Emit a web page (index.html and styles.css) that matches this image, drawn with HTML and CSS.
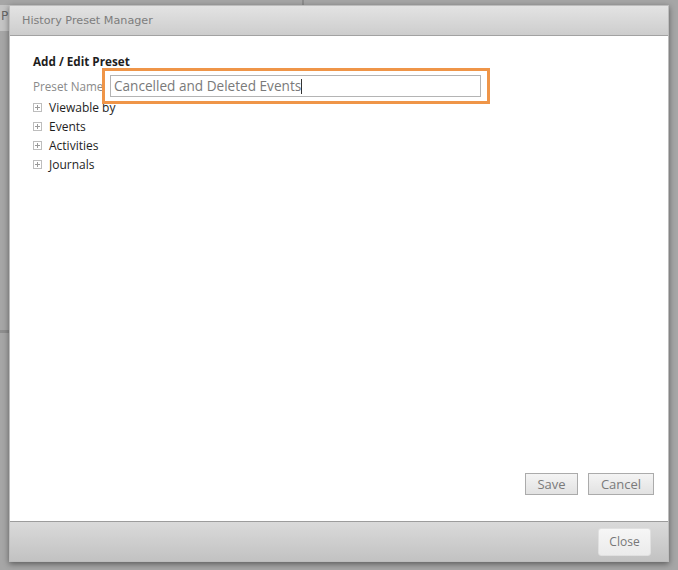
FILE: index.html
```html
<!DOCTYPE html>
<html>
<head>
<meta charset="utf-8">
<link rel="stylesheet" href="styles.css">
</head>
<body>
<div class="bg-panel"><span class="bg-p">P</span></div>
<div class="bg-line"></div>
<div class="bg-divider"></div>
<div class="dialog">
  <div class="dialog-header">History Preset Manager</div>
  <div class="dialog-content">
    <div class="section-title">Add / Edit Preset</div>
    <div class="name-row">
      <label class="name-label">Preset Name</label>
      <div class="input-wrap">
        <div class="input">Cancelled and Deleted Events<span class="caret"></span></div>
        <div class="highlight"></div>
      </div>
    </div>
    <ul class="tree">
      <li><span class="plus"></span>Viewable by</li>
      <li><span class="plus"></span>Events</li>
      <li><span class="plus"></span>Activities</li>
      <li><span class="plus"></span>Journals</li>
    </ul>
    <div class="actions">
      <button class="btn btn-save">Save</button>
      <button class="btn btn-cancel">Cancel</button>
    </div>
  </div>
  <div class="dialog-footer">
    <button class="btn-close">Close</button>
  </div>
</div>
</body>
</html>
```

FILE: styles.css
```css
html, body {
  margin: 0;
  padding: 0;
}
body {
  width: 678px;
  height: 570px;
  overflow: hidden;
  position: relative;
  background: #a6a6a6;
  font-family: "Open Sans", "DejaVu Sans", sans-serif;
  padding: 5px 9px 0 9px;
  box-sizing: border-box;
}
.bg-panel {
  position: absolute;
  left: 0;
  top: 5px;
  width: 9px;
  height: 26px;
  background: #c4c4c4;
  overflow: hidden;
}
.bg-p {
  position: absolute;
  left: 1px;
  top: 4px;
  font-family: "DejaVu Sans", sans-serif;
  font-size: 12px;
  color: #666;
}
.bg-line {
  position: absolute;
  left: 0;
  top: 330px;
  width: 9px;
  height: 3px;
  background: #8e8e8e;
}
.bg-divider {
  position: absolute;
  left: 302px;
  top: 0;
  width: 2px;
  height: 5px;
  background: #8e8e8e;
}
.dialog {
  position: relative;
  width: 660px;
  height: 557px;
  display: flex;
  flex-direction: column;
  background: #fff;
  box-shadow: 0 2px 6px rgba(0, 0, 0, 0.45);
  border: 1px solid #bdbdbd;
  box-sizing: border-box;
}
.dialog-header {
  height: 30px;
  line-height: 29px;
  padding-left: 12px;
  background: linear-gradient(#e3e3e3, #cdcdcd);
  border-bottom: 1px solid #a2a2a2;
  font-family: "DejaVu Sans", sans-serif;
  font-size: 11.2px;
  color: #7d7d7d;
  box-sizing: border-box;
}
.dialog-content {
  flex: 1;
  display: flex;
  flex-direction: column;
  padding: 17px 14px 26px 23px;
}
.section-title {
  font-weight: bold;
  font-size: 11.7px;
  color: #1e1e1e;
  line-height: 16px;
}
.name-row {
  display: flex;
  align-items: center;
  margin-top: 6px;
}
.name-label {
  font-size: 11.7px;
  color: #8a8a8a;
  width: 77px;
}
.input-wrap {
  position: relative;
}
.input {
  width: 371px;
  height: 22px;
  box-sizing: border-box;
  border: 1px solid #b4b4b4;
  padding-left: 3px;
  font-size: 13.6px;
  line-height: 20px;
  color: #7a7a7a;
  display: flex;
  align-items: center;
}
.caret {
  display: inline-block;
  width: 1px;
  height: 15px;
  background: #333;
}
.highlight {
  position: absolute;
  left: -8px;
  top: -7px;
  right: -9px;
  bottom: -7px;
  border: 3px solid #ef9548;
}
.tree {
  list-style: none;
  margin: 1px 0 0 0;
  padding: 0;
}
.tree li {
  display: flex;
  align-items: center;
  height: 19px;
  font-size: 12px;
  color: #1e1e1e;
}
.plus {
  position: relative;
  width: 9px;
  height: 9px;
  border: 1px solid #bdbdbd;
  box-sizing: border-box;
  margin-right: 7px;
}
.plus::before, .plus::after {
  content: "";
  position: absolute;
  background: #9a9a9a;
}
.plus::before {
  left: 1px;
  top: 3px;
  width: 5px;
  height: 1px;
}
.plus::after {
  left: 3px;
  top: 1px;
  width: 1px;
  height: 5px;
}
.actions {
  margin-top: auto;
  display: flex;
  justify-content: flex-end;
  gap: 10px;
}
.btn {
  height: 22px;
  border: 1px solid #ababab;
  background: linear-gradient(#f4f4f4, #e2e2e2);
  color: #7a7a7a;
  font-family: "Open Sans", sans-serif;
  font-size: 13px;
  padding: 0;
  margin: 0;
}
.btn-save { width: 53px; }
.btn-cancel { width: 66px; }
.dialog-footer {
  height: 40px;
  box-sizing: border-box;
  border-top: 1px solid #9c9c9c;
  background: linear-gradient(#dadada, #c2c2c2);
  display: flex;
  justify-content: flex-end;
  align-items: center;
  padding-right: 17px;
}
.btn-close {
  width: 53px;
  height: 28px;
  border: 1px solid #e0e0e0;
  border-radius: 3px;
  background: linear-gradient(#f6f6f6, #ebebeb);
  color: #777;
  font-family: "Open Sans", sans-serif;
  font-size: 12px;
  padding: 0;
  margin: 0;
}
```
